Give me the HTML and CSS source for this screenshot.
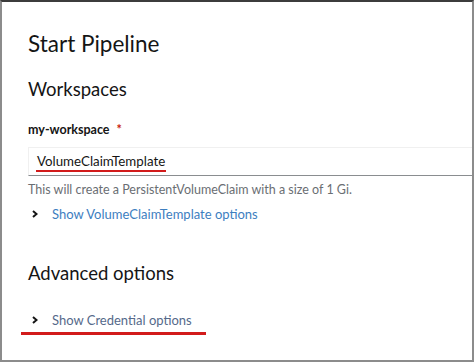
FILE: index.html
```html
<!DOCTYPE html>
<html>
<head>
<meta charset="utf-8">
<link rel="stylesheet" href="styles.css">
</head>
<body>
<div class="frame">
  <h1 class="title">Start Pipeline</h1>
  <h2 class="section">Workspaces</h2>
  <div class="label">my-workspace <span class="req">*</span></div>
  <div class="input"><span class="value">VolumeClaimTemplate</span></div>
  <div class="helper">This will create a PersistentVolumeClaim with a size of 1 Gi.</div>
  <div class="toggle toggle-vct">
    <svg class="chev" width="6" height="8" viewBox="0 0 6 8"><path d="M1 1 L4.5 4 L1 7" fill="none" stroke="#151515" stroke-width="2"/></svg>
    <span class="link">Show VolumeClaimTemplate options</span>
  </div>
  <h2 class="section adv">Advanced options</h2>
  <div class="toggle toggle-cred">
    <svg class="chev" width="6" height="8" viewBox="0 0 6 8"><path d="M1 1 L4.5 4 L1 7" fill="none" stroke="#151515" stroke-width="2"/></svg>
    <span class="link cred">Show Credential options</span>
  </div>
</div>
</body>
</html>
```
FILE: styles.css
```css
html, body {
  margin: 0;
  padding: 0;
  background: #fff;
}
.frame {
  box-sizing: border-box;
  width: 474px;
  height: 362px;
  border-top: 2px solid #3c3c3c;
  border-left: 2px solid #8c8c8c;
  border-right: 2px solid #8c8c8c;
  border-bottom: 2px solid #8c8c8c;
  padding: 0 0 0 26px;
  font-family: Lato, "Liberation Sans", sans-serif;
  color: #151515;
  overflow: hidden;
}
.title {
  margin: 27px 0 0 0;
  font-weight: 400;
  font-size: 22.5px;
  line-height: 30px;
}
.section {
  margin: 18px 0 0 0;
  font-weight: 400;
  font-size: 18.5px;
  line-height: 24px;
}
.label {
  margin-top: 20px;
  font-size: 12.5px;
  font-weight: 700;
  line-height: 18px;
  color: #151515;
}
.req {
  color: #c9190b;
  margin-left: 4px;
}
.input {
  box-sizing: border-box;
  margin-top: 8px;
  height: 29px;
  border-top: 1px solid #f0f0f0;
  border-left: 1px solid #f0f0f0;
  border-bottom: 1px solid #8a8d90;
  padding: 5px 0 0 7px;
  font-size: 13.3px;
}
.value {
  display: inline-block;
  border-bottom: 2px solid #d21b1b;
  line-height: 17px;
  padding: 0 1px;
}
.helper {
  margin-top: 5px;
  font-size: 12.5px;
  line-height: 18px;
  color: #6a6e73;
}
.toggle {
  display: flex;
  align-items: center;
  gap: 14px;
  padding-left: 4px;
  font-size: 13px;
  line-height: 20px;
}
.toggle-vct {
  margin-top: 5px;
}
.adv {
  margin-top: 37px;
}
.toggle-cred {
  margin-top: 25px;
  margin-left: -7px;
  padding-left: 11px;
  width: 174px;
  padding-bottom: 2px;
  border-bottom: 3px solid #d21b1b;
}
.link {
  color: #3d7ebf;
}
.link.cred {
  color: #55698a;
}
```
